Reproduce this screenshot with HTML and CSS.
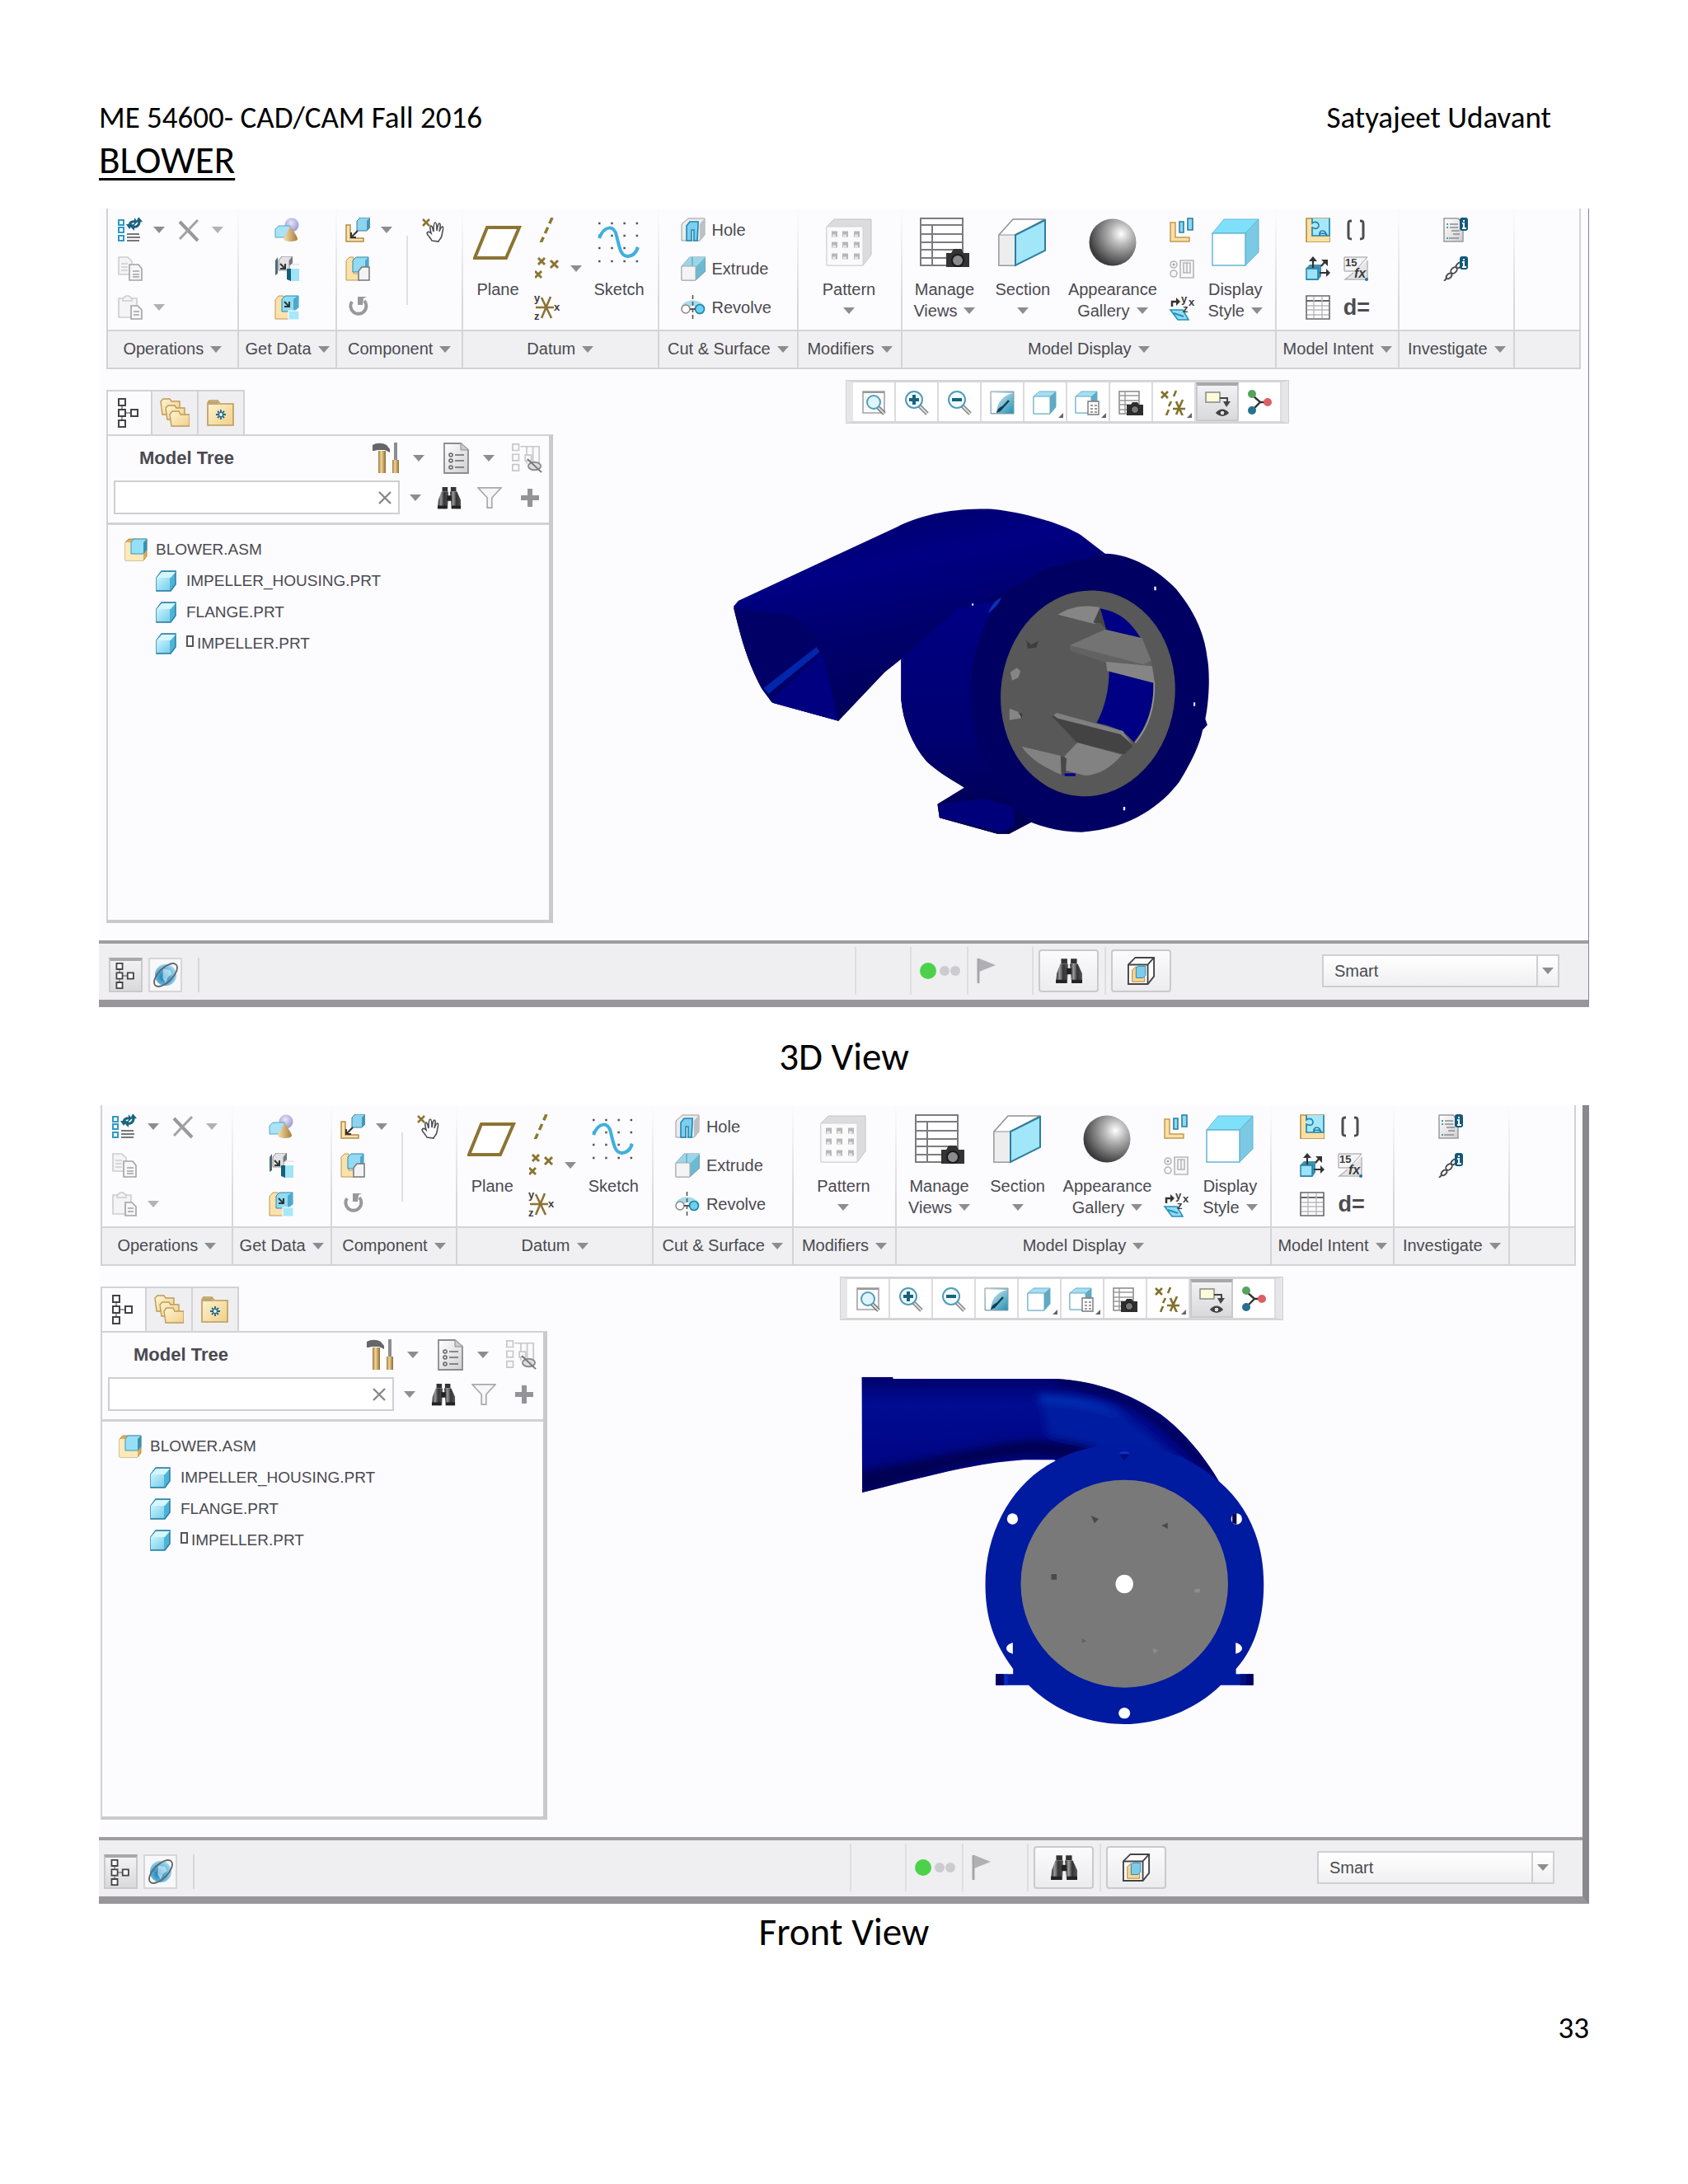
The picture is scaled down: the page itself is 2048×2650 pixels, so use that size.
FILE: index.html
```html
<!DOCTYPE html>
<html lang="en">
<head>
<meta charset="UTF-8">
<meta name="viewport" content="width=device-width, initial-scale=1.0">
<title>ME 54600 - Blower</title>
<link rel="stylesheet" href="styles.css">
</head>
<body>

<!-- icon sprite -->
<svg class="sprite" aria-hidden="true">
  <defs>
    <radialGradient id="g-sphere" cx="0.68" cy="0.32" r="0.7"><stop offset="0" stop-color="#fff"/><stop offset="0.35" stop-color="#b4b4b4"/><stop offset="1" stop-color="#3c3c3c"/></radialGradient>
    <radialGradient id="g-ball" cx="0.45" cy="0.35" r="0.7"><stop offset="0" stop-color="#e6e6fb"/><stop offset="1" stop-color="#9292c8"/></radialGradient>
    <radialGradient id="g-globe" cx="0.4" cy="0.6" r="0.7"><stop offset="0" stop-color="#1779b4"/><stop offset="0.5" stop-color="#5db4dd"/><stop offset="1" stop-color="#bfe4f2"/></radialGradient>
    <linearGradient id="g-cone"><stop offset="0" stop-color="#f7dfae"/><stop offset="1" stop-color="#a87e3c"/></linearGradient>
    <linearGradient id="g-cyan" x1="0" y1="0" x2="1" y2="1"><stop offset="0" stop-color="#c8f3ff"/><stop offset="1" stop-color="#77cfea"/></linearGradient>
    <linearGradient id="g-teal" x1="0" y1="0" x2="1" y2="1"><stop offset="0" stop-color="#f3fbfd"/><stop offset="1" stop-color="#1f8fb4"/></linearGradient>
    <linearGradient id="g-tan" x1="0" y1="0" x2="1" y2="1"><stop offset="0" stop-color="#fff4d2"/><stop offset="1" stop-color="#efd08a"/></linearGradient>
    <linearGradient id="g-wood"><stop offset="0" stop-color="#9a7a40"/><stop offset="0.4" stop-color="#f4d493"/><stop offset="1" stop-color="#8c6c35"/></linearGradient>
    <linearGradient id="g-dark"><stop offset="0" stop-color="#222"/><stop offset="0.3" stop-color="#999"/><stop offset="0.6" stop-color="#333"/><stop offset="1" stop-color="#555"/></linearGradient>
    <linearGradient id="g-gray" x1="0" y1="0" x2="1" y2="1"><stop offset="0" stop-color="#fff"/><stop offset="1" stop-color="#cfcfd2"/></linearGradient>
    <linearGradient id="g-duct" x1="0" y1="0" x2="0.35" y2="1"><stop offset="0" stop-color="#00005c"/><stop offset="0.35" stop-color="#000084"/><stop offset="0.65" stop-color="#00006c"/><stop offset="1" stop-color="#000058"/></linearGradient>
    <linearGradient id="g-side" x1="0" y1="0" x2="0" y2="1"><stop offset="0" stop-color="#000084"/><stop offset="0.6" stop-color="#000070"/><stop offset="1" stop-color="#00004e"/></linearGradient>
    <linearGradient id="g-front" x1="0" y1="0" x2="0" y2="1"><stop offset="0" stop-color="#00006a"/><stop offset="0.2" stop-color="#000c92"/><stop offset="0.6" stop-color="#000583"/><stop offset="1" stop-color="#000058"/></linearGradient>
    <filter id="f-soft" x="-20%" y="-20%" width="140%" height="140%"><feGaussianBlur stdDeviation="14"/></filter>
    <clipPath id="c-duct"><path d="M128 95H230L232 102H770C900 112 1010 155 1110 232C1180 290 1250 380 1300 475L1000 600L760 397H660C480 410 300 470 130 516Z"/></clipPath>
  </defs>

  <symbol id="i-regen" viewBox="0 0 30 30">
    <g fill="#fff" stroke="#2d9bc4" stroke-width="2"><path d="M1 3h6v6H1zM1 12h6v6H1zM1 22h6v6H1z"/></g>
    <path d="M11 20h15M11 24h16M11 28h15" stroke="#77777a" stroke-width="2"/>
    <path d="M14 10c0-4 4-6 7-5M26 5c0 5-4 7-7 6" fill="none" stroke="#1b647f" stroke-width="3"/>
    <path d="M10 8h8l-4 6zM22 6l8-1-5-6zM20 0v9l4-4zM20 7v9l-5-5z" fill="#1b647f"/>
  </symbol>
  <symbol id="i-delete" viewBox="0 0 30 30"><path d="M4 5l22 23" stroke="#98989b" stroke-width="4"/><path d="M26 3L4 26" stroke="#a2a2a5" stroke-width="3"/></symbol>
  <symbol id="i-copy" viewBox="0 0 30 30">
    <g fill="#f4f4f5" stroke="#cdcdd0" stroke-width="1.6"><path d="M1 1h11l5 5v16H1z"/><path d="M4 9h8M4 13h8M4 17h8"/></g>
    <g fill="#f6f6f7" stroke="#a2a2a5" stroke-width="1.6"><path d="M14 10h11l4 5v14H14z"/><path d="M18 18h8M18 22h8M18 25h8"/></g>
  </symbol>
  <symbol id="i-paste" viewBox="0 0 30 30">
    <g fill="#f4f4f5" stroke="#cdcdd0" stroke-width="1.6"><path d="M1 4h22v23H1z"/><path d="M6 7V4l4-3h3l4 3v3z"/></g>
    <g fill="#f6f6f7" stroke="#a2a2a5" stroke-width="1.6"><path d="M16 13h8l5 5v11H16z"/><path d="M19 20h7M19 24h7"/></g>
  </symbol>
  <symbol id="i-shapes" viewBox="0 0 30 30">
    <circle cx="21" cy="9" r="8.500" fill="url(#g-ball)"/>
    <path d="M1 14l4-4h14v14H1z" fill="#a9e3f5" stroke="#56a9c8"/>
    <path d="M19 10c3 6 9 12 9 16c0 4-16 4-17 0c1-5 6-9 8-16z" fill="url(#g-cone)"/>
  </symbol>
  <symbol id="i-copygeom" viewBox="0 0 30 30">
    <path d="M1 5l3-4v20l-3 2z" fill="#4f6a7a"/><path d="M5 5l4-5h13l-4 5v12H5z" fill="#e2e2e4" stroke="#8c8c90"/>
    <path d="M18 5l4-5v8l-4 5z" fill="#77777b"/><path d="M7 9l6 6M13 9v6H7" stroke="#333" stroke-width="2" fill="none"/>
    <path d="M15 15h5v15l-5-2z" fill="#14607a"/><path d="M20 15h10v15H20z" fill="#9fe4f7"/><path d="M15 15l5-5h10" stroke="#c7dfe7" fill="none"/>
  </symbol>
  <symbol id="i-shrink" viewBox="0 0 30 30">
    <path d="M1 6l4-5h6v18h7v10H1z" fill="#fae2ae" stroke="#c2964a"/>
    <path d="M9 5l4-4h16v14l-6 5H9z" fill="#8fdcf3" stroke="#2d88ad"/><path d="M23 5l5-4v14l-5 4z" fill="#4ba9cc"/>
    <path d="M12 8l6 6M18 8v6h-6" stroke="#333" stroke-width="2" fill="none"/><path d="M17 19h13v11H17z" fill="#a6e8fa" stroke="#fff"/>
  </symbol>
  <symbol id="i-assemble" viewBox="0 0 30 30">
    <path d="M1 9h5v16h16v4H1z" fill="#fbe3ad" stroke="#b48c44" stroke-width="1.500"/>
    <path d="M14 4l4-4h12v12l-4 4H14z" fill="#8fd4ee" stroke="#2b83a6"/><path d="M26 4l4-4v12l-4 4z" fill="#4795b5"/>
    <path d="M15 16L8 23M7 18v6h6" stroke="#333" stroke-width="2" fill="none"/>
  </symbol>
  <symbol id="i-create" viewBox="0 0 30 30">
    <path d="M1 5l4-4h5v20h8v8H1z" fill="#fae2ae" stroke="#c2964a"/>
    <path d="M9 5l4-4h15v14l-5 4H9z" fill="#93daf2" stroke="#2d88ad"/><path d="M24 5l4-4v14l-4 4z" fill="#4ba9cc"/>
    <path d="M16 18l4-5h9v16H16z" fill="#f3f3f5" stroke="#77777a" stroke-width="1.500"/>
  </symbol>
  <symbol id="i-repeat" viewBox="0 0 30 30"><path d="M8 8a9.500 9.500 0 1 0 15-1" fill="none" stroke="#98989b" stroke-width="4"/><path d="M15 2h11l-4 2-1 8h-6z" fill="#98989b"/></symbol>
  <symbol id="i-drag" viewBox="0 0 30 30">
    <path d="M1 2l8 8M9 2L1 10" stroke="#8d7433" stroke-width="2.500"/>
    <path d="M12 28c-2-4-5-6-6-9c1-3 4-1 5 0c-1-4-2-9 0-9s2 5 3 7c0-5 0-11 2-11s2 6 2 10c1-4 1-9 3-9s1 6 0 10c1-3 2-6 4-6c2 1-1 8-1 11c-1 4-3 4-4 7z" fill="#fff" stroke="#4e4e52" stroke-width="1.600"/>
  </symbol>
  <symbol id="i-plane" viewBox="0 0 60 60"><path d="M17 12H56L40 49H2z" fill="#fff" stroke="#8c7433" stroke-width="4"/></symbol>
  <symbol id="i-axis" viewBox="0 0 30 30"><path d="M21 0L7 31" stroke="#8b7a35" stroke-width="3.500" stroke-dasharray="8 5"/></symbol>
  <symbol id="i-points" viewBox="0 0 30 30"><path d="M4 2l8 8M12 2l-8 8M19 5l9 9M28 5l-9 9M0 18l8 8M8 18l-8 8" stroke="#8b7431" stroke-width="3"/></symbol>
  <symbol id="i-sketch" viewBox="0 0 60 60">
    <path d="M5 7h50M5 22h50M5 37h50M5 53h50" stroke="#555" stroke-width="2.500" stroke-dasharray="2.500 12.700"/>
    <path d="M6 25C12 10 24 8 27 22C31 38 32 46 40 47C47 47 51 42 53 36" fill="none" stroke="#3eb0dd" stroke-width="4"/>
  </symbol>
  <symbol id="i-hole" viewBox="0 0 30 30">
    <path d="M1 8l8-7h20v20l-6 7H1z" fill="#ececee" stroke="#9b9ba0"/><path d="M23 8l6-7v20l-6 7z" fill="#bfbfc4"/>
    <path d="M7 28V10l4-5h10v5l-1 18h-4V15h-3v13z" fill="#7dcfee" stroke="#1e87b4" stroke-width="1.600"/>
  </symbol>
  <symbol id="i-extrude" viewBox="0 0 30 30">
    <path d="M1 12L11 1h19v17L18 29H1z" fill="#6db9d2" stroke="#7f949c"/><path d="M11 1h19L19 12H1z" fill="#9ad6e8"/><path d="M14 1v11" stroke="#4d98b2"/>
    <path d="M1 12h17v17H1z" fill="#f4f4f5" stroke="#a8a8ac"/>
  </symbol>
  <symbol id="i-revolve" viewBox="0 0 30 30">
    <path d="M1 14C4 4 24 4 29 14L22 20L15 12L6 18z" fill="#a8dbe9"/>
    <circle cx="6" cy="17" r="5" fill="#fff" stroke="#87878b" stroke-width="1.500"/><circle cx="23" cy="17" r="5.500" fill="#6cd0ee" stroke="#1884aa" stroke-width="1.600"/>
    <path d="M11 17h7" stroke="#555" stroke-width="2"/><path d="M14.500 0v30" stroke="#555" stroke-width="1.600" stroke-dasharray="5 3"/>
  </symbol>
  <symbol id="i-pattern" viewBox="0 0 60 60">
    <path d="M3 11l9-9h45v43l-10 13H3z" fill="#dcdcde" stroke="#c4c4c7"/><path d="M3 11h44v47H3z" fill="#fafafb" stroke="#d2d2d5"/>
    <path d="M9 20h7M22 20h7M36 20h7M9 33h7M22 33h7M36 33h7M9 47h7M22 47h7M36 47h7" stroke="#b7b7ba" stroke-width="7"/>
    <path d="M10 22h4M23 22h4M37 22h4M10 35h4M23 35h4M37 35h4M10 49h4M23 49h4M37 49h4" stroke="#e6e6e8" stroke-width="3"/>
  </symbol>
  <symbol id="i-views" viewBox="0 0 60 60">
    <path d="M1 1h51v57H1z" fill="#fff" stroke="#7c7c80" stroke-width="2"/><path d="M1 9h51M1 20h51M1 30h51M1 39h51M1 49h51M15 9v49" stroke="#7c7c80" stroke-width="2" fill="none"/>
    <path d="M32 43h6l3-5h9l3 5h7v18H32z" fill="#333"/><circle cx="46" cy="52" r="7" fill="#8b8b8e" stroke="#1a1a1a" stroke-width="2"/>
  </symbol>
  <symbol id="i-section" viewBox="0 0 60 60">
    <path d="M1 21L18 2H57L21 21V58H1z" fill="#fff" stroke="#909094" stroke-width="1.500"/><path d="M1 21h20v37H1z" fill="#ededee" stroke="#909094"/>
    <path d="M21 21L57 3V40L21 58z" fill="#a2e6f9" stroke="#2b7ea0" stroke-width="2"/>
  </symbol>
  <symbol id="i-sphere" viewBox="0 0 60 60"><circle cx="30" cy="30" r="28.500" fill="url(#g-sphere)"/></symbol>
  <symbol id="i-explode" viewBox="0 0 30 30">
    <path d="M1 6h6v18h17v5H1z" fill="#fbe0a5" stroke="#c39a4f" stroke-width="1.500"/>
    <path d="M12 5h5v13h-5zM22 1h6v14h-6z" fill="#8fd8f2" stroke="#237fa6" stroke-width="1.600"/>
  </symbol>
  <symbol id="i-toggle" viewBox="0 0 30 30">
    <g fill="#f7f7f8" stroke="#b6b6b9" stroke-width="1.600"><circle cx="5" cy="10" r="4"/><circle cx="5" cy="21" r="4"/><path d="M13 5h16v21H13zM17 8h4v12h-4zM21 8h4v12h-4z"/></g>
    <circle cx="5" cy="10" r="1.500" fill="#a5a5a8"/>
  </symbol>
  <symbol id="i-style" viewBox="0 0 60 60">
    <path d="M2 19L16 2H58L42 19z" fill="#7fe0fa" stroke="#67bedb"/><path d="M42 19L58 2V42L42 58z" fill="#7cc9e4" stroke="#67b4d0"/><path d="M2 19h40v39H2z" fill="#fff" stroke="#64b7d5" stroke-width="1.500"/>
  </symbol>
  <symbol id="i-puzzle" viewBox="0 0 30 30">
    <path d="M1 1h29v29H1z" fill="#fbe0a5" stroke="#b58e47" stroke-width="1.600"/><path d="M8 1h22v21H8z" fill="#a6e8fa"/>
    <path d="M29 1v21H18c-1-1-1-2 0-3c4 0 8 0 8 3M8 1v6c6-5 11 3 6 6c-2 1-4 0-6-1v10h9c-2-8 9-8 8 0" fill="none" stroke="#2380a7" stroke-width="1.600"/>
  </symbol>
  <symbol id="i-parens" viewBox="0 0 30 30"><path d="M10 4C6 4 6 5 6 8v14c0 3 0 4 4 4M20 4c4 0 4 1 4 4v14c0 3 0 4-4 4" fill="none" stroke="#4c4c50" stroke-width="3"/></symbol>
  <symbol id="i-publish" viewBox="0 0 30 30">
    <path d="M1 14l4-4h14v14l-4 5H1z" fill="#3f8fb0"/><path d="M1 15h14v13H1z" fill="#9be3f9" stroke="#2380a7" stroke-width="1.500"/>
    <path d="M9 14V4M19 12l5-6M17 20h9" stroke="#333" stroke-width="2.200"/><path d="M4 6l5-6 5 6zM19 4h8v8zM25 15l5 5-5 5z" fill="#333"/>
  </symbol>
  <symbol id="i-table" viewBox="0 0 30 30">
    <path d="M1 1h28v28H1z" fill="#fff" stroke="#67676a" stroke-width="1.600"/><path d="M1 7h28" stroke="#67676a" stroke-width="2"/><path d="M2 13h26M2 18h26M2 24h26M10 2v26M20 2v26" stroke="#b9b9bc" stroke-width="1.400"/>
  </symbol>
  <symbol id="i-report" viewBox="0 0 30 30">
    <path d="M1 1h17l6 6v22H1z" fill="url(#g-gray)" stroke="#9b9b9f" stroke-width="1.500"/><path d="M8 8h10M8 12h10M10 16h10M12 20h8M7 25h12" stroke="#8d8d91" stroke-width="1.400"/><path d="M4 8h2M4 12h2M4 25h2" stroke="#3fa59e" stroke-width="2"/>
    <rect x="20" y="0" width="10" height="16" rx="3" fill="#13597a"/><path d="M25 3v2M23 7h2v6M23 13h5" stroke="#fff" stroke-width="2" fill="none"/>
  </symbol>
  <symbol id="i-chain" viewBox="0 0 30 30">
    <g fill="none" stroke="#4c4c50" stroke-width="1.900"><ellipse cx="7" cy="24" rx="4" ry="2.500" transform="rotate(-45 7 24)"/><ellipse cx="13" cy="17" rx="4.500" ry="3" transform="rotate(-45 13 17)"/><ellipse cx="19" cy="11" rx="4" ry="2.500" transform="rotate(-45 19 11)"/><path d="M1 30l4-4M10 21l1-1M16 14l1-1"/></g>
    <rect x="20" y="0" width="10" height="16" rx="3" fill="#13597a"/><path d="M25 3v2M23 7h2v6M23 13h5" stroke="#fff" stroke-width="2" fill="none"/>
  </symbol>

  <!-- in-graphics toolbar -->
  <symbol id="i-refit" viewBox="0 0 32 32"><path d="M3 3h26v26H3z" fill="#fbfbfb" stroke="#a3a3a7" stroke-width="1.600"/><path d="M3 4h26" stroke="#999" stroke-width="2"/><path d="M21 22l8 8" stroke="#77777b" stroke-width="5"/><path d="M21 22l8 8" stroke="#ddd" stroke-width="2"/><circle cx="16" cy="16" r="8" fill="#dff5fb" stroke="#4f9dbb" stroke-width="2"/></symbol>
  <symbol id="i-zoomin" viewBox="0 0 32 32"><path d="M19 20l10 10" stroke="#88888c" stroke-width="5"/><path d="M19 20l10 10" stroke="#ddd" stroke-width="2"/><circle cx="13" cy="13" r="10" fill="#f2fafd" stroke="#4f9dbb" stroke-width="2"/><path d="M7 13h12M13 7v12" stroke="#17637f" stroke-width="4"/></symbol>
  <symbol id="i-zoomout" viewBox="0 0 32 32"><path d="M19 20l10 10" stroke="#88888c" stroke-width="5"/><path d="M19 20l10 10" stroke="#ddd" stroke-width="2"/><circle cx="13" cy="13" r="10" fill="#f2fafd" stroke="#4f9dbb" stroke-width="2"/><path d="M7 13h12" stroke="#17637f" stroke-width="4"/></symbol>
  <symbol id="i-repaint" viewBox="0 0 32 32"><path d="M2 3h28v27H2z" fill="url(#g-teal)" stroke="#8c9ba1"/><path d="M3 5h26C16 8 10 16 9 29H3z" fill="#fff"/><path d="M9 29c1-5 6-9 9-8l-4 6z" fill="#123f52"/><path d="M14 25l10-11" stroke="#123f52" stroke-width="2.500"/></symbol>
  <symbol id="i-cube" viewBox="0 0 32 32"><path d="M2 9l7-6h20v19l-7 8H2z" fill="#a5dff1" stroke="#6db5cf"/><path d="M22 9l7-6v19l-7 8z" fill="#62a9c3"/><path d="M2 9h20v21H2z" fill="#fff" stroke="#5ba9c6"/></symbol>
  <symbol id="i-saved" viewBox="0 0 32 32"><path d="M1 9l7-6h19v19l-7 7H1z" fill="#a5dff1" stroke="#6db5cf"/><path d="M20 9l7-6v15h-7z" fill="#62a9c3"/><path d="M1 9h19v20H1z" fill="#fff" stroke="#5ba9c6"/><path d="M16 15h13v16H16z" fill="#fff" stroke="#77777b" stroke-width="1.400"/><path d="M19 20h3M24 20h3M19 24h3M24 24h3M19 28h3M24 28h3" stroke="#77777b" stroke-width="1.600"/></symbol>
  <symbol id="i-viewmgr" viewBox="0 0 32 32"><path d="M2 3h24v27H2z" fill="#fff" stroke="#88888b" stroke-width="1.500"/><path d="M2 8h24M2 14h24M2 19h24M2 25h24M9 3v27" stroke="#99999c" stroke-width="1.400"/><path d="M11 19h5l2-3h6l2 3h5v13H11z" fill="#2e2e2e"/><circle cx="21" cy="25" r="4.500" fill="#777" stroke="#111"/></symbol>
  <symbol id="i-datum" viewBox="0 0 32 32"><path d="M1 3l8 8M9 3l-8 8M19 2l-3 7M13 15l-3 6M10 25l-3 7M15 24h15M19 15l8 18M27 13l-8 18" stroke="#82712c" stroke-width="2.600"/></symbol>
  <symbol id="i-annot" viewBox="0 0 32 32"><path d="M2 3h17v12H2z" fill="#fefbd9" stroke="#88888b" stroke-width="1.500"/><path d="M19 10h9v6" fill="none" stroke="#444" stroke-width="2"/><path d="M23 14h9l-5 7z" fill="#444"/><path d="M14 28c4-6 12-6 16 0c-4 5-12 5-16 0z" fill="#444"/><circle cx="22" cy="28" r="3" fill="#ddd" stroke="#222"/></symbol>
  <symbol id="i-spin" viewBox="0 0 32 32"><path d="M7 7l10 9h10M17 16L7 26" fill="none" stroke="#333" stroke-width="2.400"/><circle cx="7" cy="6" r="5" fill="#57a35d"/><circle cx="26" cy="16" r="5" fill="#dc5f64"/><circle cx="7" cy="26" r="5" fill="#27708f"/></symbol>

  <!-- model tree -->
  <symbol id="i-tree" viewBox="0 0 36 36"><path d="M9 5v26M9 18h14" stroke="#99999c" stroke-width="2"/><path d="M5 1h8v8H5zM5 14h8v8H5zM5 27h8v8H5zM20 14h8v8h-8z" fill="#fff" stroke="#434347" stroke-width="2"/></symbol>
  <symbol id="i-folders" viewBox="0 0 36 36"><g fill="url(#g-tan)" stroke="#be9a56" stroke-width="1.400"><path d="M1 4l3-3h8l2 3h10v16H3z"/><path d="M7 12l3-3h8l2 3h10v14H9z"/><path d="M12 20l3-4h8l2 4h11v14H14z"/></g></symbol>
  <symbol id="i-fav" viewBox="0 0 36 36"><path d="M2 6l2-3h10l3 4h16v26H2z" fill="url(#g-tan)" stroke="#be9a56" stroke-width="1.600"/><path d="M3 8V4h11l2 4z" fill="#c0a676"/><path d="M18 14v12M12 20h12M14 16l8 8M22 16l-8 8" stroke="#1b6686" stroke-width="1.800"/><circle cx="18" cy="20" r="2" fill="#e8f6fb"/></symbol>
  <symbol id="i-tools" viewBox="0 0 36 38"><path d="M8 10h9v27H8z" fill="url(#g-wood)"/><path d="M1 3c5-3 12-3 17 0l4 5v4l-6-3H7L3 10H1z" fill="#66666a"/><path d="M27 0h4v22h-4z" fill="#8d8d91"/><path d="M25 21h8v16h-8z" fill="url(#g-wood)"/></symbol>
  <symbol id="i-list" viewBox="0 0 36 38"><path d="M3 1h20l9 8v28H3z" fill="url(#g-gray)" stroke="#8c8c90" stroke-width="1.800"/><path d="M23 1v8h9" fill="#ccc" stroke="#8c8c90"/><g fill="none" stroke="#67676b" stroke-width="1.600"><circle cx="11" cy="15" r="2"/><circle cx="11" cy="22" r="2"/><circle cx="11" cy="30" r="2"/><path d="M16 15h11M16 22h11M16 30h11"/></g></symbol>
  <symbol id="i-columns" viewBox="0 0 40 38"><g fill="#fafafa" stroke="#c8c8cb" stroke-width="1.800"><path d="M12 4h24v30M20 4v22M28 4v22"/><path d="M2 1h8v8H2zM2 14h8v8H2zM2 27h8v8H2zM18 15h8v7h-8z"/></g><ellipse cx="30" cy="29" rx="8" ry="5" fill="#ddd" stroke="#8c8c90" stroke-width="2"/><path d="M21 20l18 17" stroke="#77777b" stroke-width="2"/></symbol>
  <symbol id="i-binoc" viewBox="0 0 32 30"><path d="M7 1h7v6H7zM18 1h7v6h-7z" fill="#333"/><path d="M6 7h9l-1 22H1l1-11z" fill="url(#g-dark)"/><path d="M17 7h9l5 11v11H19z" fill="url(#g-dark)"/><path d="M13 12h6v7h-6z" fill="#222"/><path d="M1 25h12v4H1zM19 25h12v4H19z" fill="#222"/></symbol>
  <symbol id="i-funnel" viewBox="0 0 32 30"><path d="M1 2h30L19 15v13h-6V15z" fill="#f7f7f8" stroke="#a9a9ad" stroke-width="1.800"/></symbol>
  <symbol id="i-plus" viewBox="0 0 30 30"><path d="M4 15h22M15 4v22" stroke="#949498" stroke-width="6"/></symbol>
  <symbol id="i-x" viewBox="0 0 20 20"><path d="M3 3l14 14M17 3L3 17" stroke="#88888c" stroke-width="2.400"/></symbol>
  <symbol id="i-asm" viewBox="0 0 28 28"><path d="M1 5l4-4h22v21l-4 5H1z" fill="#ddae5b" stroke="#b28b46"/><path d="M1 5h7v14h15v8H1z" fill="#fde9b9"/><path d="M8 5l3-4h16v13l-4 5H8z" fill="#96e0f7" stroke="#3a98ba"/><path d="M23 5l4-4v13l-4 5z" fill="#3c91b2"/></symbol>
  <symbol id="i-part" viewBox="0 0 28 28"><path d="M2 10l6-8h17v16l-6 8H2z" fill="#4fb3d8" stroke="#287c9e" stroke-width="1.500"/><path d="M2 10l6-7h17l-6 7z" fill="#d6f6fd"/><path d="M2 10h16v15H2z" fill="url(#g-cyan)"/></symbol>

  <!-- status bar -->
  <symbol id="i-globe" viewBox="0 0 34 34"><circle cx="17" cy="17" r="14" fill="url(#g-globe)"/><path d="M14 9l9 2 2 5-5 4-3 7-4-6z" fill="#e3f6fa" opacity=".6"/><ellipse cx="17" cy="17" rx="19" ry="9" transform="rotate(-45 17 17)" fill="none" stroke="#66666a" stroke-width="2"/></symbol>
  <symbol id="i-lights" viewBox="0 0 52 24"><circle cx="12" cy="12" r="10" fill="#4cd24a"/><circle cx="32" cy="12" r="6" fill="#ccccd0"/><circle cx="45" cy="12" r="6" fill="#ccccd0"/></symbol>
  <symbol id="i-flag" viewBox="0 0 24 32"><path d="M2 1v30" stroke="#a6a6aa" stroke-width="3"/><path d="M3 1l20 8L3 17z" fill="#b0b0b4"/></symbol>
  <symbol id="i-box" viewBox="0 0 36 36"><path d="M1 10L10 1h24v24l-8 10H1z" fill="#fff" stroke="#444448" stroke-width="2"/><path d="M1 10h25v25M26 10l8-9" fill="none" stroke="#444448" stroke-width="2"/><path d="M6 17l4-4h4v13h8v6H6z" fill="#f7d494" stroke="#b4813a"/><path d="M11 14l3-2h9v12l-3 3h-9z" fill="#7ccdea" stroke="#2b83a6"/></symbol>

  <!-- blower assembly, 3D -->
  <symbol id="model-3d" viewBox="0 -114 2136 1434" preserveAspectRatio="none">
    <path d="M574 625V780C580 860 605 940 650 1005C690 1050 730 1075 762 1100L682 1160L688 1210L860 1268H895L960 1226C1010 1250 1060 1262 1110 1262C1260 1250 1350 1160 1400 1080C1440 1000 1462 940 1470 890L1484 872L1478 850C1490 780 1492 680 1484 630C1475 530 1440 450 1392 378C1340 310 1260 250 1180 248L800 330z" fill="#000062"/>
    <path d="M574 620L740 440L860 420C790 560 770 700 785 850C800 1000 870 1120 960 1226L895 1268H860L688 1210L682 1160L762 1100C730 1075 690 1050 650 1005C605 940 580 860 574 780z" fill="url(#g-side)"/>
    <path d="M688 1160L820 1140L910 1170V1240L870 1262L688 1206z" fill="#00007a"/>
    <path d="M76 440L90 420L560 152C650 98 740 84 845 86C960 100 1070 150 1110 182L1180 248L1010 300C930 350 870 410 740 450L574 632L525 680L388 857L190 790L160 740C115 640 95 540 76 440z" fill="url(#g-duct)"/>
    <path d="M76 446L260 475L335 570L388 857L190 790L160 740C115 640 95 540 76 446z" fill="#000067"/>
    <path d="M190 780L340 610L388 857L195 793z" fill="#000080"/><path d="M165 738L322 588L332 606L180 758z" fill="#0026ac"/>
    <path d="M832 466C840 440 855 415 872 408C866 430 850 450 832 466z" fill="#0b30b4"/>
    <ellipse cx="1129" cy="757" rx="259" ry="375" fill="#575857" transform="rotate(3 1129 757)"/>
    <path d="M1165 448C1230 462 1260 505 1286 556L1183 526z" fill="#000084"/><path d="M1192 676L1324 718C1326 800 1305 880 1265 935C1240 895 1210 880 1155 864C1180 810 1192 740 1192 676z" fill="#000084"/>
    <path d="M1040 470C1080 440 1120 434 1165 444L1150 505z" fill="#868686"/><path d="M1165 444L1183 522L1165 500H1145z" fill="#454545"/>
    <path d="M1075 582L1180 524L1290 556L1318 640L1290 662L1078 602z" fill="#737373"/><path d="M1075 582L1295 652L1318 636V660L1190 648L1078 602z" fill="#626262"/>
    <path d="M1183 642L1320 658L1328 720L1186 675z" fill="#858585"/>
    <path d="M1022 840L1032 830L1235 895L1262 950L1238 978L1098 938z" fill="#434343"/><path d="M1026 836L1036 828L1232 893L1262 944L1226 906L1040 848z" fill="#808080"/>
    <path d="M932 950L1050 985L1055 1056C1005 1030 960 1000 932 950zM1060 985L1098 936L1230 980C1200 1025 1160 1055 1120 1056L1064 1038z" fill="#828282"/>
    <path d="M1048 984l18 10-4 62h-12z" fill="#484848"/><path d="M1060 1048h32v10h-32z" fill="#000090"/>
    <path d="M1326 718C1328 810 1305 885 1270 937" fill="none" stroke="#999" stroke-width="4"/>
    <path d="M898 680L918 664L929 676L922 700L904 710zM896 812L926 826L936 846L896 854z" fill="#858585"/><path d="M946 564l14 16 22-14-6 24-26 4zM922 824l12 8v20z" fill="#3e3e3e"/>
    <path d="M1326 368h6v14h-6zM1443 790h5v13h-5zM1234 1170h6v13h-6zM784 430h5v7h-5z" fill="#e4ecff"/>
  </symbol>

  <!-- blower assembly, front -->
  <symbol id="model-front" viewBox="0 0 1568 1440" preserveAspectRatio="none">
    <g clip-path="url(#c-duct)">
      <path d="M120 90H1320V620H120z" fill="url(#g-front)"/>
      <g filter="url(#f-soft)">
        <path d="M120 520C320 460 480 400 660 380L900 400L880 350C780 320 640 320 560 345L120 440z" fill="#000052"/>
        <path d="M710 160C900 170 1010 230 1130 360L1280 480H900V350L740 310z" fill="#001ba0"/>
        <path d="M710 158C850 165 940 190 1000 245C900 205 820 190 710 185z" fill="#0630b6"/>
        <path d="M770 95C1010 120 1180 260 1310 480L1240 430C1110 260 980 160 770 125z" fill="#00005a"/>
      </g>
    </g>
    <path d="M568 1177H625V1158C560 1060 534 970 534 850C534 660 620 480 765 400C850 345 930 345 990 345C1110 345 1210 390 1300 475C1400 570 1447 700 1447 850C1447 970 1420 1080 1356 1158V1177H1413V1217H1306C1220 1310 1100 1359 990 1359C870 1359 760 1310 676 1217H568z" fill="#001aa0"/>
    <path d="M568 1177h26v40h-26zM1390 1177h23v40h-23z" fill="#000064"/><path d="M597 1177h10v40h-10z" fill="#0730c0"/><path d="M1370 1177h20v40h-20z" fill="#00107e"/>
    <ellipse cx="990" cy="848" rx="340" ry="378" fill="#797979"/>
    <ellipse cx="990" cy="849" rx="29" ry="34" fill="#fff"/><ellipse cx="623" cy="612" rx="18" ry="20" fill="#fff"/><ellipse cx="1358" cy="612" rx="18" ry="20" fill="#fff"/><path d="M1358 590v42l-14-6v-30z" fill="#000050"/>
    <ellipse cx="990" cy="1319" rx="19" ry="20" fill="#fff"/><path d="M624 1063v40c-28-8-28-32 0-40zM1355 1063v40c28-8 28-32 0-40z" fill="#fff"/>
    <path d="M972 374C975 364 1005 364 1008 374z" fill="#0a3ac4"/><path d="M976 378h28l-14 20z" fill="#000a78"/>
    <path d="M880 600l26 12-14 16zM1112 636l20-10v22zM750 813h18v20h-18z" fill="#4a4a4a"/><path d="M850 1048l16 8-14 8z" fill="#626262"/><path d="M1082 1082l18 8-12 14zM1220 866h18v14h-18z" fill="#8c8c8c"/>
  </symbol>
</svg>

<main class="page">
  <header class="page-header"><span>ME 54600- CAD/CAM Fall 2016</span><span class="author">Satyajeet Udavant</span></header>
  <h1>BLOWER</h1>
  <figure>
    <div class="window window-3d" data-model="model-3d" data-title="3D view of the blower"></div>
    <figcaption>3D View</figcaption>
  </figure>
  <figure>
    <div class="window window-front" data-model="model-front" data-title="Front view of the blower"></div>
    <figcaption>Front View</figcaption>
  </figure>
  <footer>33</footer>
</main>

<template id="window-template">
  <div class="ribbon">
    <section class="group">
      <div class="group-body ops">
        <div class="stack">
          <div class="row"><button aria-label="Regenerate"><svg class="s"><use href="#i-regen"/></svg><i class="caret"></i></button><button aria-label="Delete"><svg class="s"><use href="#i-delete"/></svg><i class="caret light"></i></button></div>
          <button aria-label="Copy"><svg class="s"><use href="#i-copy"/></svg></button>
          <button aria-label="Paste"><svg class="s"><use href="#i-paste"/></svg><i class="caret light"></i></button>
        </div>
      </div>
      <button class="group-label">Operations<i class="caret"></i></button>
    </section>
    <section class="group">
      <div class="group-body center">
        <div class="stack">
          <button aria-label="User-defined feature"><svg class="s"><use href="#i-shapes"/></svg></button>
          <button aria-label="Copy geometry"><svg class="s"><use href="#i-copygeom"/></svg></button>
          <button aria-label="Shrinkwrap"><svg class="s"><use href="#i-shrink"/></svg></button>
        </div>
      </div>
      <button class="group-label">Get Data<i class="caret"></i></button>
    </section>
    <section class="group">
      <div class="group-body component">
        <div class="stack">
          <button aria-label="Assemble"><svg class="s"><use href="#i-assemble"/></svg><i class="caret"></i></button>
          <button aria-label="Create"><svg class="s"><use href="#i-create"/></svg></button>
          <button aria-label="Repeat"><svg class="s"><use href="#i-repeat"/></svg></button>
        </div>
        <div class="divider"></div>
        <div class="stack"><button aria-label="Drag components"><svg class="s"><use href="#i-drag"/></svg></button></div>
      </div>
      <button class="group-label">Component<i class="caret"></i></button>
    </section>
    <section class="group">
      <div class="group-body datum">
        <button class="big"><svg><use href="#i-plane"/></svg><span>Plane</span></button>
        <div class="stack">
          <button aria-label="Axis"><svg class="s"><use href="#i-axis"/></svg></button>
          <button aria-label="Point"><svg class="s"><use href="#i-points"/></svg><i class="caret"></i></button>
          <button aria-label="Coordinate system">
            <svg class="s" viewBox="0 0 30 30">
              <path d="M1 15h22M8 3l12 25M19 2L8 28" stroke="#8c7433" stroke-width="2.600"/>
              <g class="glyph"><text x="-1" y="8">y</text><text x="23" y="19">x</text><text x="-1" y="30">z</text></g>
            </svg>
          </button>
        </div>
        <button class="big"><svg><use href="#i-sketch"/></svg><span>Sketch</span></button>
      </div>
      <button class="group-label">Datum<i class="caret"></i></button>
    </section>
    <section class="group">
      <div class="group-body cut">
        <div class="stack">
          <button><svg class="s"><use href="#i-hole"/></svg>Hole</button>
          <button><svg class="s"><use href="#i-extrude"/></svg>Extrude</button>
          <button><svg class="s"><use href="#i-revolve"/></svg>Revolve</button>
        </div>
      </div>
      <button class="group-label">Cut &amp; Surface<i class="caret"></i></button>
    </section>
    <section class="group">
      <div class="group-body center">
        <button class="big"><svg><use href="#i-pattern"/></svg><span>Pattern</span><span><i class="caret"></i></span></button>
      </div>
      <button class="group-label">Modifiers<i class="caret"></i></button>
    </section>
    <section class="group">
      <div class="group-body center display">
        <button class="big"><svg><use href="#i-views"/></svg><span>Manage</span><span>Views<i class="caret"></i></span></button>
        <button class="big"><svg><use href="#i-section"/></svg><span>Section</span><span><i class="caret"></i></span></button>
        <button class="big"><svg><use href="#i-sphere"/></svg><span>Appearance</span><span>Gallery<i class="caret"></i></span></button>
        <div class="stack">
          <button aria-label="Exploded view"><svg class="s"><use href="#i-explode"/></svg></button>
          <button aria-label="Toggle status"><svg class="s"><use href="#i-toggle"/></svg></button>
          <button aria-label="Orientation">
            <svg class="s" viewBox="0 0 30 30">
              <path d="M1 18h15l7 12H10z" fill="#8fdcf4" stroke="#2691ba" stroke-width="1.600"/><path d="M5 22l12 4" stroke="#2691ba" stroke-width="2"/>
              <path d="M3 14V8h7" stroke="#333" stroke-width="2.500" fill="none"/><path d="M8 3l5 5-5 5z" fill="#333"/>
              <g class="glyph"><text x="14" y="9">y</text><text x="23" y="13">x</text><text x="16" y="21">z</text></g>
            </svg>
          </button>
        </div>
        <button class="big"><svg><use href="#i-style"/></svg><span>Display</span><span>Style<i class="caret"></i></span></button>
      </div>
      <button class="group-label">Model Display<i class="caret"></i></button>
    </section>
    <section class="group">
      <div class="group-body center intent">
        <div class="stack">
          <button aria-label="Component interface"><svg class="s"><use href="#i-puzzle"/></svg></button>
          <button aria-label="Publish geometry"><svg class="s"><use href="#i-publish"/></svg></button>
          <button aria-label="Family table"><svg class="s"><use href="#i-table"/></svg></button>
        </div>
        <div class="stack">
          <button aria-label="Parameters"><svg class="s"><use href="#i-parens"/></svg></button>
          <button aria-label="Switch dimensions">
            <svg class="s" viewBox="0 0 30 30">
              <path d="M1 1h28L14 18H1z" fill="#f4f4f4" stroke="#98989b"/><path d="M29 5v23H2l10-8" fill="#e6e6e8" stroke="#b6b6b9" stroke-width="1.500"/>
              <g class="glyph"><text x="2" y="12">15</text><text class="glyph-it" x="13" y="26">fx</text></g><circle cx="28" cy="28" r="2" fill="#24739b"/>
            </svg>
          </button>
          <button class="dim" aria-label="Relations">d=</button>
        </div>
      </div>
      <button class="group-label">Model Intent<i class="caret"></i></button>
    </section>
    <section class="group">
      <div class="group-body center">
        <div class="stack">
          <button aria-label="Bill of materials"><svg class="s"><use href="#i-report"/></svg></button>
          <button aria-label="Reference viewer"><svg class="s"><use href="#i-chain"/></svg></button>
        </div>
      </div>
      <button class="group-label">Investigate<i class="caret"></i></button>
    </section>
    <section class="group">
      <div class="group-body"></div>
      <div class="group-label"></div>
    </section>
  </div>

  <div class="workspace">
    <aside class="navigator">
      <div class="tabs">
        <button class="tab active" aria-label="Model tree"><svg><use href="#i-tree"/></svg></button>
        <button class="tab" aria-label="Folder browser"><svg><use href="#i-folders"/></svg></button>
        <button class="tab" aria-label="Favorites"><svg><use href="#i-fav"/></svg></button>
      </div>
      <div class="panel">
        <div class="panel-head">
          <h2>Model Tree</h2>
          <button aria-label="Tree settings"><svg class="m"><use href="#i-tools"/></svg><i class="caret small"></i></button>
          <button aria-label="Show"><svg class="m"><use href="#i-list"/></svg><i class="caret small"></i></button>
          <button aria-label="Tree columns"><svg class="m"><use href="#i-columns"/></svg></button>
        </div>
        <div class="panel-search">
          <div class="search"><input type="text" aria-label="Search the model tree"><button aria-label="Clear"><svg><use href="#i-x"/></svg></button></div>
          <button aria-label="Search options"><i class="caret small"></i></button>
          <button aria-label="Find"><svg class="s"><use href="#i-binoc"/></svg></button>
          <button aria-label="Filter"><svg class="s"><use href="#i-funnel"/></svg></button>
          <button aria-label="Add"><svg class="s"><use href="#i-plus"/></svg></button>
        </div>
        <ul class="tree">
          <li><svg><use href="#i-asm"/></svg>BLOWER.ASM</li>
          <li class="child"><svg><use href="#i-part"/></svg>IMPELLER_HOUSING.PRT</li>
          <li class="child"><svg><use href="#i-part"/></svg>FLANGE.PRT</li>
          <li class="child"><svg><use href="#i-part"/></svg><i class="packed"></i>IMPELLER.PRT</li>
        </ul>
      </div>
    </aside>
    <div class="graphics">
      <div class="view-bar">
        <button aria-label="Refit"><svg><use href="#i-refit"/></svg></button>
        <button aria-label="Zoom in"><svg><use href="#i-zoomin"/></svg></button>
        <button aria-label="Zoom out"><svg><use href="#i-zoomout"/></svg></button>
        <button aria-label="Repaint"><svg><use href="#i-repaint"/></svg></button>
        <button class="more" aria-label="Display style"><svg><use href="#i-cube"/></svg></button>
        <button class="more" aria-label="Saved orientations"><svg><use href="#i-saved"/></svg></button>
        <button aria-label="View manager"><svg><use href="#i-viewmgr"/></svg></button>
        <button class="more" aria-label="Datum display"><svg><use href="#i-datum"/></svg></button>
        <button class="pressed" aria-label="Annotation display"><svg><use href="#i-annot"/></svg></button>
        <button aria-label="Spin center"><svg><use href="#i-spin"/></svg></button>
      </div>
      <svg class="model" role="img"><use/></svg>
    </div>
  </div>

  <div class="status">
    <button class="toggle pressed" aria-label="Navigator"><svg><use href="#i-tree"/></svg></button>
    <button class="toggle" aria-label="Browser"><svg><use href="#i-globe"/></svg></button>
    <div class="status-left"></div>
    <div class="status-cell gap-cell"></div>
    <div class="status-cell lights-cell"><svg class="lights"><use href="#i-lights"/></svg></div>
    <div class="status-cell flag-cell"><svg class="flag"><use href="#i-flag"/></svg></div>
    <div class="status-cell"><button class="raised" aria-label="Find"><svg><use href="#i-binoc"/></svg></button></div>
    <div class="status-cell"><button class="raised" aria-label="Select in box"><svg><use href="#i-box"/></svg></button></div>
    <div class="filter"><select aria-label="Selection filter"><option>Smart</option><option>Part</option><option>Feature</option></select><i class="caret small"></i></div>
  </div>
</template>

<script>
  // both windows share the same chrome, only the model differs
  const template = document.getElementById('window-template');

  document.querySelectorAll('.window').forEach(function(win) {
    const content = template.content.cloneNode(true);
    const model = content.querySelector('.model');
    model.classList.add(win.dataset.model);
    model.setAttribute('aria-label', win.dataset.title);
    model.querySelector('use').setAttribute('href', '#' + win.dataset.model);
    win.appendChild(content);
  });
</script>

</body>
</html>
```
FILE: styles.css
```css
* {
  box-sizing: border-box;
}
body {
  margin: 0;
  background: #fff;
  color: #000;
  font-family: Carlito, Lato, sans-serif;
}
.sprite {
  position: absolute;
  width: 0;
  height: 0;
}
.page {
  padding: 120px 120px 0;
}
.page-header {
  display: flex;
  justify-content: space-between;
  font-size: 37px;
  line-height: 46px;
}
.author {
  margin-right: 46px;
}
h1 {
  margin: 2px 0 33px;
  font-size: 47px;
  line-height: 52px;
  font-weight: normal;
  text-decoration: underline;
  text-decoration-thickness: 3px;
  text-underline-offset: 6px;
}
figure {
  margin: 0;
}
figcaption {
  text-align: center;
  font-size: 47px;
  line-height: 68px;
}
.window-3d + figcaption {
  padding: 26px 0 25px;
}
footer {
  margin-top: 50px;
  text-align: right;
  font-size: 37px;
  line-height: 66px;
}

/* window */
.window {
  background: #fcfbfe;
  color: #4a4a50;
  font-family: "Liberation Sans", Arial, sans-serif;
  font-size: 20px;
  border-bottom: 9px solid #98969a;
}
.window-3d {
  border-right: 1px solid #88868a;
}
.window-front {
  border-right: 8px solid #8a888c;
}
.window-3d .ribbon,
.window-3d .workspace {
  margin: 0 9px;
}
.window-front .ribbon,
.window-front .workspace {
  margin: 0 8px 0 2px;
}
.window button {
  display: flex;
  align-items: center;
  padding: 0;
  border: 0;
  background: none;
  color: inherit;
  font: inherit;
}
.window svg {
  flex: none;
  overflow: visible;
}
.s {
  width: 30px;
  height: 30px;
}
.m {
  width: 38px;
  height: 38px;
}
.caret {
  display: inline-block;
  border: 7px solid transparent;
  border-top: 8px solid #8d8d91;
  border-bottom: 0;
}
.caret.light {
  border-top-color: #b2b2b6;
}
.caret.small {
  border-width: 8px 7px 0;
}

/* ribbon */
.ribbon {
  display: grid;
  grid-template-columns: 157fr 120fr 153fr 238fr 170fr 126fr 455fr 150fr 140fr 80fr;
  border: 2px solid #d2d2d5;
  border-top: 0;
}
.group {
  min-width: 0;
}
.group + .group {
  background: linear-gradient(#fcfbfe, #d8d8dc 60%) left / 2px 100% no-repeat;
}
.group-body {
  display: flex;
  height: 147px;
  padding-top: 11px;
}
.group-body.center {
  justify-content: center;
}
.stack {
  display: flex;
  flex-direction: column;
  gap: 17px;
}
.stack button {
  gap: 13px;
  height: 30px;
}
.row {
  display: flex;
  gap: 14px;
}
.ops,
.component {
  padding-left: 12px;
}
.component {
  gap: 17px;
}
.divider {
  width: 2px;
  height: 84px;
  margin-top: 22px;
  background: #e0e0e3;
}
.datum {
  padding-left: 10px;
  gap: 11px;
}
.cut {
  padding-left: 28px;
}
.cut .stack button {
  gap: 8px;
}
.display {
  gap: 15px;
}
.intent {
  gap: 16px;
}
.window .dim {
  color: #4c4c50;
  font-size: 27px;
  font-weight: bold;
  width: 30px;
}
.window .big {
  flex-direction: column;
  align-items: center;
  align-self: flex-start;
  min-width: 68px;
  line-height: 26px;
}
.display .big {
  min-width: 80px;
}
.display .big:last-child {
  min-width: 70px;
}
.big svg {
  width: 60px;
  height: 60px;
  margin-bottom: 14px;
}
.big span {
  display: flex;
  align-items: center;
  gap: 8px;
  min-height: 26px;
}
.window .group-label {
  display: flex;
  justify-content: center;
  align-items: center;
  gap: 8px;
  width: 100%;
  height: 46px;
  padding-bottom: 1px;
  border-top: 2px solid #d4d4d7;
  border-left: 2px solid #d4d4d7;
  background: #f0f0f2;
}
.group:first-child .group-label {
  border-left: 0;
}
.glyph {
  font-size: 13px;
  font-weight: bold;
  fill: #3c3c40;
}
.glyph-it {
  font-style: italic;
  font-size: 16px;
}

/* navigator */
.workspace {
  display: grid;
  grid-template-columns: 542px 1fr;
  padding-bottom: 21px;
}
.navigator {
  display: flex;
  flex-direction: column;
  padding-top: 25px;
}
.tabs {
  display: flex;
}
.window .tab {
  justify-content: center;
  width: 56px;
  height: 54px;
  border: 2px solid #d2d2d5;
  border-left: 0;
  border-bottom: 0;
  background: #efeff1;
}
.window .tab.active {
  border-left: 2px solid #d2d2d5;
  background: #fcfbfe;
}
.tab svg {
  width: 36px;
  height: 36px;
}
.panel {
  flex: 1;
  min-height: 593px;
  border: 2px solid #d2d2d5;
  border-right: 5px solid #cacacd;
  border-bottom: 4px solid #cacacd;
}
.panel-head {
  display: flex;
  align-items: center;
  gap: 20px;
  height: 54px;
  padding: 0 8px 0 38px;
}
.panel-head button {
  gap: 13px;
}
h2 {
  flex: 1;
  margin: 0;
  font-size: 22px;
}
.panel-search {
  display: flex;
  align-items: center;
  gap: 19px;
  height: 54px;
  padding: 2px 8px 12px 7px;
  border-bottom: 3px solid #d2d2d5;
}
.search {
  display: flex;
  flex: 1;
  align-items: center;
  height: 41px;
  margin-right: -7px;
  padding-right: 6px;
  border: 2px solid #cfcfd2;
  background: #fff;
}
.search input {
  flex: 1;
  min-width: 0;
  border: 0;
  outline: none;
  background: transparent;
  font: inherit;
}
.search svg {
  width: 20px;
  height: 20px;
}
.tree {
  margin: 0;
  padding: 11px 0 0 20px;
  list-style: none;
  font-size: 19px;
  line-height: 38px;
}
.tree li {
  display: flex;
  align-items: center;
}
.tree svg {
  width: 28px;
  height: 28px;
  margin-right: 10px;
}
.tree .child {
  padding-left: 37px;
}
.packed {
  width: 9px;
  height: 14px;
  margin-right: 4px;
  margin-bottom: 6px;
  border: 2px solid #55555a;
}

/* graphics area */
.graphics {
  display: flex;
  flex-direction: column;
  align-items: center;
  gap: 38px;
  padding-top: 14px;
}
.view-bar {
  display: flex;
  border: 2px solid #d6d6d9;
  border-left: 8px solid #e6e6e9;
  border-right: 8px solid #e6e6e9;
  outline: 1px solid #d2d2d5;
}
.window .view-bar button {
  justify-content: center;
  width: 52px;
  height: 47px;
  border-right: 2px solid #dcdcdf;
  background: #fff;
}
.view-bar svg {
  width: 32px;
  height: 32px;
}
.view-bar .more {
  position: relative;
}
.view-bar .more::after {
  content: "";
  position: absolute;
  right: 3px;
  bottom: 4px;
  border: 3px solid #66666a;
  border-top-color: transparent;
  border-left-color: transparent;
}
.window .view-bar .pressed,
.window .toggle.pressed {
  background: linear-gradient(#f2f2f4, #d9d9dc);
  border: 2px solid #cacacd;
  border-top: 4px solid #a8a8ac;
}
.model-3d {
  width: 872px;
  height: 478px;
}
.model-front {
  width: 580px;
  height: 480px;
}

/* status bar */
.status {
  display: flex;
  align-items: center;
  gap: 7px;
  height: 72px;
  padding: 0 35px 2px 12px;
  border-top: 4px solid #9f9da1;
  background: #efeff1;
}
.window-front .status {
  padding: 0 34px 2px 6px;
}
.window .toggle {
  justify-content: center;
  width: 41px;
  height: 42px;
  margin-top: 10px;
  border: 2px solid #d6d6d9;
  background: #f8f8fa;
}
.toggle svg {
  width: 32px;
  height: 32px;
}
.status-left {
  flex: 1;
  height: 42px;
  margin: 10px 0 0 12px;
  border-left: 2px solid #d6d6d9;
}
.status-cell {
  display: flex;
  align-items: center;
  height: 58px;
  padding-left: 6px;
  border-left: 2px solid #dedee1;
}
.gap-cell {
  width: 60px;
}
.lights-cell {
  padding-left: 8px;
}
.flag-cell {
  width: 72px;
  padding-left: 10px;
}
.lights {
  width: 52px;
  height: 24px;
}
.flag {
  width: 24px;
  height: 32px;
}
.window .raised {
  justify-content: center;
  width: 73px;
  height: 52px;
  border: 2px solid #cacacd;
  border-radius: 4px;
  background: linear-gradient(#fbfbfc, #ececef);
}
.raised svg {
  width: 34px;
  height: 34px;
}
.filter {
  display: flex;
  align-items: center;
  width: 288px;
  height: 40px;
  margin-left: 176px;
  border: 2px solid #cfcfd2;
  background: linear-gradient(#fff, #f0f0f2);
}
.filter select {
  flex: 1;
  height: 36px;
  margin-right: 5px;
  padding: 0 13px;
  border: 0;
  border-right: 2px solid #cfcfd2;
  appearance: none;
  background: transparent;
  color: #4a4a50;
  font: inherit;
}
.filter .caret {
  margin-right: 5px;
}
```
